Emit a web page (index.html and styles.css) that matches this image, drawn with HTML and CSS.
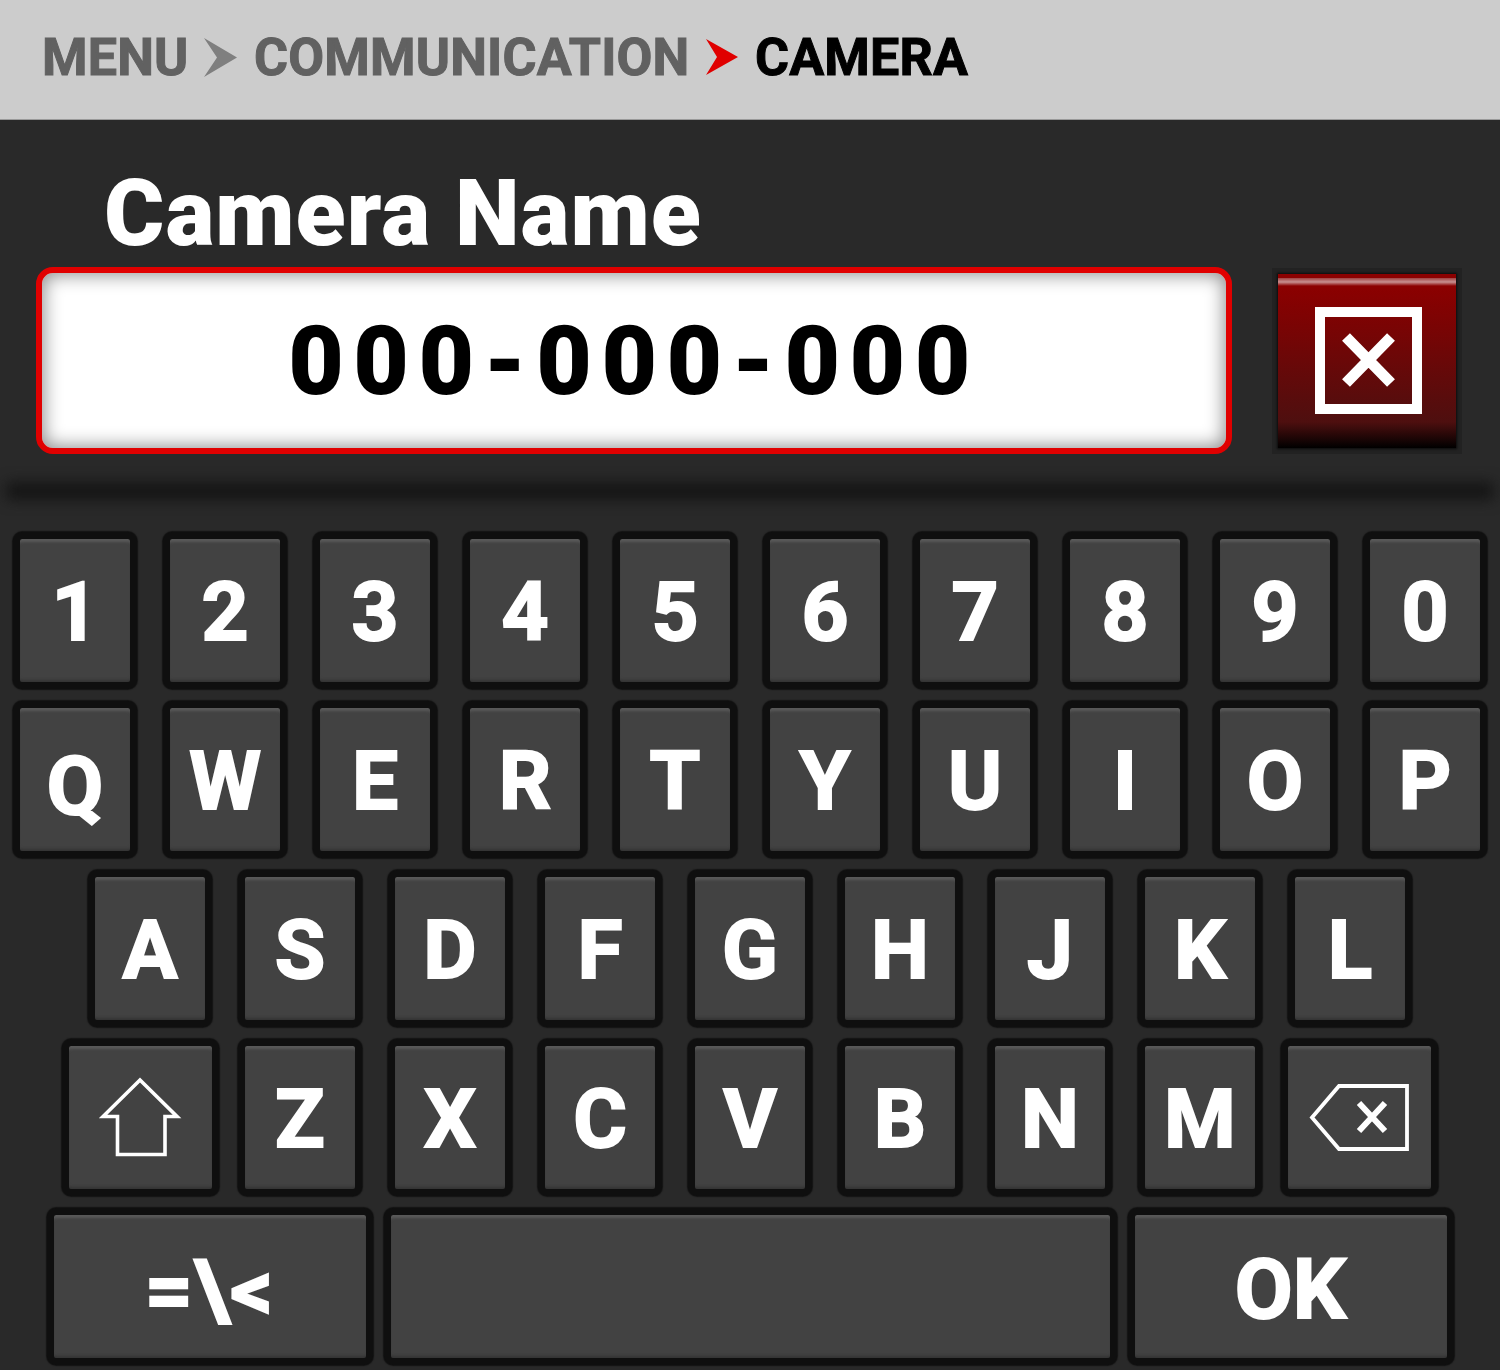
FILE: index.html
```html
<!DOCTYPE html>
<html lang="en">
<head>
  <meta charset="UTF-8">
  <title>Camera Name</title>
  <link rel="stylesheet" href="styles.css">
</head>
<body>
  <div class="crumbs">
    <span class="crumb crumb-menu">MENU</span>
    <svg class="arrow" width="33" height="40" viewBox="0 0 33 40"><polygon points="0,0 33,19.5 0,39 13,19.5" fill="#7f7f7f"/></svg>
    <span class="crumb crumb-comm">COMMUNICATION</span>
    <svg class="arrow" width="33" height="40" viewBox="0 0 33 40"><polygon points="1,1 33,19 1,37 12,19" fill="#e00000"/></svg>
    <span class="crumb crumb-cam">CAMERA</span>
  </div>

  <div class="entry">
    <div class="title">Camera Name</div>
    <div class="entry-row">
      <div class="name-box">000-000-000</div>
      <div class="clear-frame">
        <div class="clear-btn">
          <svg width="108" height="108" viewBox="0 0 108 108">
            <rect x="5" y="5" width="97" height="97" fill="none" stroke="#fff" stroke-width="10"/>
            <path d="M31 30 L76 76 M76 30 L31 76" stroke="#fff" stroke-width="11" fill="none"/>
          </svg>
        </div>
      </div>
    </div>
  </div>

  <div class="divider"></div>

  <div class="keyboard">
    <div class="row">
      <div class="key">1</div><div class="key">2</div><div class="key">3</div><div class="key">4</div><div class="key">5</div>
      <div class="key">6</div><div class="key">7</div><div class="key">8</div><div class="key">9</div><div class="key">0</div>
    </div>
    <div class="row">
      <div class="key key-q">Q</div><div class="key">W</div><div class="key">E</div><div class="key">R</div><div class="key">T</div>
      <div class="key">Y</div><div class="key">U</div><div class="key">I</div><div class="key">O</div><div class="key">P</div>
    </div>
    <div class="row">
      <div class="key">A</div><div class="key">S</div><div class="key">D</div><div class="key">F</div><div class="key">G</div>
      <div class="key">H</div><div class="key">J</div><div class="key">K</div><div class="key">L</div>
    </div>
    <div class="row row-shift">
      <div class="key key-wide">
        <svg width="84" height="82" viewBox="0 0 84 82">
          <path d="M41 3 L78 39.5 H66 V77.5 H18.5 V39.5 H4 Z" fill="none" stroke="#fff" stroke-width="3.6"/>
        </svg>
      </div>
      <div class="key">Z</div><div class="key">X</div><div class="key">C</div><div class="key">V</div>
      <div class="key">B</div><div class="key">N</div><div class="key">M</div>
      <div class="key key-wide">
        <svg width="102" height="70" viewBox="0 0 102 70">
          <path d="M30 3 H98 V66 H30 L3 34.5 Z" fill="none" stroke="#fff" stroke-width="3.8"/>
          <path d="M50 20 L76 48 M76 20 L50 48" stroke="#fff" stroke-width="6" fill="none"/>
        </svg>
      </div>
    </div>
    <div class="row row-bottom">
      <div class="key key-bar key-sym">=\&lt;</div>
      <div class="key key-space"></div>
      <div class="key key-bar key-ok">OK</div>
    </div>
  </div>
</body>
</html>
```

FILE: styles.css
```css
html, body {
  margin: 0;
  height: 1370px;
  overflow: hidden;
}

body {
  background: #292929;
  font-family: Roboto, "Liberation Sans", sans-serif;
  color: #fff;
}

/* breadcrumb */
.crumbs {
  height: 119px;
  background: #ccc;
  border-bottom: 1px solid #999;
  display: flex;
  align-items: center;
  padding-left: 42px;
  font-size: 52px;
  font-weight: 700;
  letter-spacing: 0.2px;
  -webkit-text-stroke: 1px currentColor;
}
.crumb { line-height: 1; margin-top: -4px; }
.crumb-menu { color: #616161; width: 145px; }
.crumb-comm { color: #616161; width: 434px; }
.crumb-cam { color: #000; }
.arrow { margin: -4px 17px 0 17px; }

/* name entry */
.entry { padding-left: 36px; }
.title {
  font-size: 92px;
  font-weight: 900;
  line-height: 104px;
  padding: 42px 0 0 68px;
  height: 105px;
  letter-spacing: 1px;
}
.entry-row {
  display: flex;
  align-items: flex-start;
  gap: 40px;
  margin-top: 0;
}
.name-box {
  width: 1196px;
  height: 187px;
  box-sizing: border-box;
  background: #fff;
  border: 6px solid #e00000;
  border-radius: 17px;
  box-shadow: inset 0 0 18px 2px rgba(0, 0, 0, 0.45);
  color: #000;
  font-size: 96px;
  font-weight: 900;
  letter-spacing: 9.5px;
  display: flex;
  align-items: center;
  justify-content: center;
}
.clear-frame {
  width: 190px;
  height: 186px;
  box-sizing: border-box;
  background: #222;
  padding: 6px 6px;
  margin-top: 1px;
}
.clear-btn {
  height: 174px;
  display: flex;
  align-items: center;
  justify-content: center;
  background: linear-gradient(#8b0000 8%, #7a0404 30%, #4e0f0f 85%, #000 100%);
  box-shadow: 0 0 2px 1px #0c0c0c;
  position: relative;
}
.clear-btn svg { margin-left: 3px; }
.clear-btn::before {
  content: "";
  position: absolute;
  top: 4px;
  left: 0;
  right: 0;
  height: 8px;
  background: linear-gradient(#a04040, #c89090 50%, #8b0000);
}

.divider {
  height: 18px;
  margin: 28px 6px 0;
  background: #151515;
  filter: blur(7px);
}

/* keyboard */
.keyboard {
  margin-top: 32px;
  display: flex;
  flex-direction: column;
  gap: 12px;
}
.row {
  display: flex;
  justify-content: center;
  gap: 26px;
}
.row-shift .key-wide:first-child { margin-right: -7px; }
.row-shift .key-wide:last-child { margin-left: -7px; }
.row-bottom { gap: 11px; }

.key {
  width: 124px;
  height: 157px;
  box-sizing: border-box;
  padding-top: 3px;
  background: #424242;
  border: 7px solid #0f0f0f;
  border-radius: 9px;
  box-shadow: 0 0 1px 1px #131313, inset 0 5px 3px -2px #5a5a5a, inset 0 -4px 3px -2px #333;
  font-size: 82px;
  font-weight: 700;
  display: flex;
  align-items: center;
  justify-content: center;
  -webkit-text-stroke: 2px #fff;
}
.key-q { padding-top: 12px; }
.key-wide { width: 157px; padding-top: 0; }
.key-bar { width: 326px; }
.key-space { width: 733px; }
.key-sym { font-size: 84px; letter-spacing: 1px; padding-top: 7px; }
.key-ok { font-size: 84px; padding-top: 6px; }
```
